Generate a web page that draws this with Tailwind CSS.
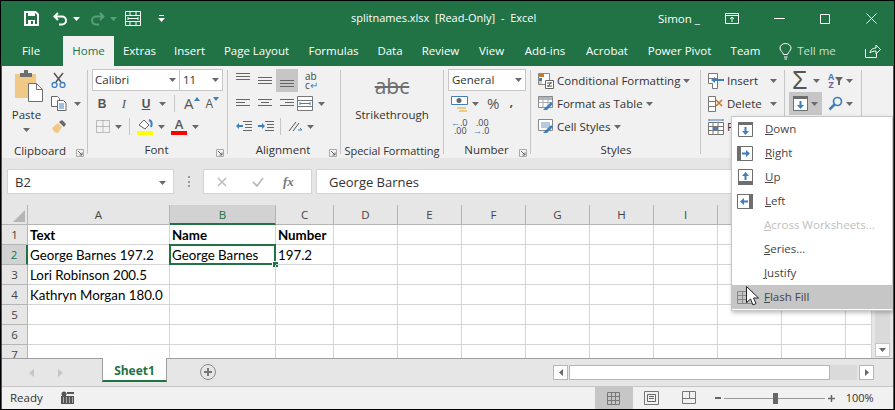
<!DOCTYPE html>
<html>
<head>
<meta charset="utf-8">
<script src="https://cdn.jsdelivr.net/npm/@tailwindcss/browser@4"></script>
</head>
<body class="bg-black">
<!-- shared glyphs -->
<svg class="hidden">
  <symbol id="tri" viewBox="0 0 7 4"><path d="M0 0h7L3.5 4z" fill="#6a6a6a"/></symbol>
  <symbol id="launch" viewBox="0 0 8 8"><path d="M.5.5h7v7h-7z" fill="none" stroke="#aaa"/><path d="M2 2l4 4M6 3.5V6H3.5" fill="none" stroke="#666"/></symbol>
  <symbol id="lines" viewBox="0 0 14 8"><path d="M0 .5h14M0 3.5h14M0 6.5h14" stroke="#666"/></symbol>
</svg>

<div class="relative w-[895px] h-[410px] overflow-hidden border border-black bg-[#217346] px-px pb-px flex flex-col font-['Open_Sans',sans-serif] text-[11.5px] text-[#333]">

  <!-- title bar -->
  <div class="h-[35px] flex items-center text-white shrink-0">
    <svg class="ml-[22px]" width="15" height="15" viewBox="0 0 15 15"><path d="M1 1h10.5L14 3.500V14H1z" fill="none" stroke="#fff" stroke-width="2"/><path d="M4 1h7v4H4zM4 9h7v5H4z" fill="#fff"/><path d="M7 10h2v3H7z" fill="#217346"/></svg>
    <svg class="ml-[14px]" width="15" height="14" viewBox="0 0 15 14"><path d="M5 1L1.500 4.500 5 8M2 4.500h7a4 4 0 0 1 0 8H6" fill="none" stroke="#fff" stroke-width="2"/></svg>
    <svg class="ml-[5px] w-[7px] h-[4px]" viewBox="0 0 7 4"><path d="M0 0h7L3.500 4z" fill="#fff"/></svg>
    <svg class="ml-[10px]" width="15" height="14" viewBox="0 0 15 14"><path d="M10 1l3.500 3.500L10 8M13 4.500H6a4 4 0 0 0 0 8h3" fill="none" stroke="#5a9e7b" stroke-width="2"/></svg>
    <svg class="ml-[5px] w-[7px] h-[4px]" viewBox="0 0 7 4"><path d="M0 0h7L3.500 4z" fill="#5a9e7b"/></svg>
    <svg class="ml-[8px]" width="16" height="15" viewBox="0 0 16 15"><path d="M.5.500h15v14H.5zM.5 4.500h15M.5 10.500h15M3 7.500h10M3 6v3M13 6v3M5 .5v4M11 .5v4M5 10.500v4M11 10.500v4" fill="none" stroke="#fff"/></svg>
    <svg class="ml-[17px]" width="7" height="8" viewBox="0 0 7 8"><path d="M1 .5h5" stroke="#fff"/><path d="M0 3h7L3.500 7z" fill="#fff"/></svg>
    <span class="ml-[186px] w-[191px] whitespace-pre text-[11px]">splitnames.xlsx  [Read-Only]  -  Excel</span>
    <span class="ml-[116px] whitespace-pre">Simon _</span>
    <svg class="ml-[25px]" width="14" height="11" viewBox="0 0 14 11"><path d="M.5.500h13v10H.5zM.5 2.500h13M7 9V4M5 6l2-2 2 2" fill="none" stroke="#fff"/></svg>
    <svg class="ml-[35px]" width="11" height="1" viewBox="0 0 11 1"><path d="M0 .5h11" stroke="#fff"/></svg>
    <svg class="ml-[35px]" width="10" height="10" viewBox="0 0 10 10"><path d="M.5.500h9v9h-9z" fill="none" stroke="#fff"/></svg>
    <svg class="ml-[36px]" width="11" height="11" viewBox="0 0 11 11"><path d="M.5.500l10 10M10.500.5l-10 10" stroke="#fff"/></svg>
  </div>

  <!-- tabs -->
  <div class="h-[30px] flex items-stretch shrink-0 pl-[10px] text-white text-[11.5px] leading-[30px] whitespace-nowrap text-center">
    <span class="w-[38px]">File</span>
    <span class="ml-[13px] w-[51px] bg-[#f1f1f1] text-[#217346]">Home</span>
    <span class="w-[51px]">Extras</span>
    <span class="w-[49px]">Insert</span>
    <span class="w-[85px]">Page Layout</span>
    <span class="w-[69px]">Formulas</span>
    <span class="w-[44px]">Data</span>
    <span class="w-[57px]">Review</span>
    <span class="w-[45px]">View</span>
    <span class="w-[62px]">Add-ins</span>
    <span class="w-[62px]">Acrobat</span>
    <span class="w-[83px]">Power Pivot</span>
    <span class="w-[49px]">Team</span>
    <svg class="ml-[9px] mt-[7px]" width="13" height="17" viewBox="0 0 13 17"><path d="M4.500 11.500C4 9 1 8 1 5a5.500 4.500 0 0 1 11 0c0 3-3 4-3.500 6.500zM5 14h3.500M5.500 16h2.500" fill="none" stroke="#fff"/></svg>
    <span class="ml-[5px] w-[39px] text-[#c9ddd2]">Tell me</span>
    <svg class="ml-[29px] mt-[8px]" width="16" height="14" viewBox="0 0 16 14"><path d="M.5 5v8.500h11V10M5 9c0-3 3-5 6-5V1l4.500 4.500L11 10V7c-2 0-4.500 .5-6 2z" fill="none" stroke="#fff"/></svg>
  </div>

  <!-- ribbon -->
  <div class="h-[92px] shrink-0 bg-[#f1f1f1] flex py-1">

    <!-- clipboard -->
    <div class="relative w-[86px] border-r border-[#c6c6c6] flex flex-col">
      <div class="h-[76px] flex">
        <div class="w-[49px] flex flex-col items-center">
          <svg class="ml-[4px]" width="30" height="32" viewBox="0 0 30 32"><path d="M1 4h21v24H1z" fill="#f0c987"/><path d="M6 3h4V0h4v3h4v4H6z" fill="#6e6e6e"/><path d="M14.500 13.500h8l6 6v12h-14z" fill="#fff" stroke="#6e6e6e"/><path d="M22.500 13.500v6h6" fill="none" stroke="#6e6e6e"/></svg>
          <span class="mt-[3px] leading-[20px]">Paste</span>
          <svg class="w-[7px] h-[4px] mt-[3px]"><use href="#tri"/></svg>
        </div>
        <div class="flex flex-col">
          <svg class="mt-[2px]" width="15" height="16" viewBox="0 0 15 16"><path d="M3 1l7 9M12 1L5 10" stroke="#555" stroke-width="1.500"/><circle cx="3.500" cy="13" r="2.500" fill="none" stroke="#3f7fbf" stroke-width="1.300"/><circle cx="11.500" cy="13" r="2.500" fill="none" stroke="#3f7fbf" stroke-width="1.300"/></svg>
          <div class="flex items-center mt-[8px]">
            <svg width="16" height="15" viewBox="0 0 16 15"><path d="M.5.500h6l2 2v8h-8z" fill="#fff" stroke="#666"/><path d="M6.500 4.500h6l2.500 2.500v7.500H6.500z" fill="#fff" stroke="#666"/><path d="M8 8h5M8 10h5M8 12h5" stroke="#3f7fbf"/></svg>
            <svg class="ml-[7px] w-[7px] h-[4px]"><use href="#tri"/></svg>
          </div>
          <svg class="mt-[8px]" width="16" height="15" viewBox="0 0 16 15"><path d="M1 9l6-5 4 4-4 6c-3 0-5-2-6-5z" fill="#f0c987"/><path d="M8 3l3-2 4 4-2 3z" fill="#666"/></svg>
        </div>
      </div>
      <div class="h-2 leading-[10px] text-center pr-[9px]">Clipboard</div>
      <svg class="absolute right-[3px] bottom-[-3px] w-2 h-2"><use href="#launch"/></svg>
    </div>

    <!-- font -->
    <div class="relative w-[140px] border-r border-[#c6c6c6] flex flex-col">
      <div class="h-[76px] -mt-px pl-[4px]">
        <div class="h-[23px] flex">
          <div class="w-[88px] h-[22px] bg-white border border-[#c6c6c6] flex items-center justify-between pl-[2px] pr-[3px]">Calibri<svg class="w-[7px] h-[4px]"><use href="#tri"/></svg></div>
          <div class="w-[43px] h-[22px] bg-white border border-l-0 border-[#c6c6c6] flex items-center justify-between pl-[3px] pr-[3px]">11<svg class="w-[7px] h-[4px]"><use href="#tri"/></svg></div>
        </div>
        <div class="h-[23px] flex items-center text-[#555]">
          <span class="w-[22px] text-center font-bold text-[12px] font-['Liberation_Sans',sans-serif] -ml-px">B</span>
          <span class="w-[22px] text-center italic text-[13px] font-['Liberation_Serif',serif]">I</span>
          <span class="w-[22px] text-center underline text-[12px] font-bold font-['Liberation_Sans',sans-serif]">U</span>
          <svg class="ml-[2px] w-[7px] h-[4px]"><use href="#tri"/></svg>
          <span class="ml-[8px] w-px h-[17px] bg-[#c6c6c6]"></span>
          <span class="ml-[9px] text-[15px] leading-none">A</span>
          <svg class="mb-[9px]" width="6" height="4" viewBox="0 0 6 4"><path d="M0 4h6L3 0z" fill="#3f7fbf"/></svg>
          <span class="ml-[6px] text-[12px] leading-none">A</span>
          <svg class="mb-[9px]" width="6" height="4" viewBox="0 0 6 4"><path d="M0 0h6L3 4z" fill="#3f7fbf"/></svg>
        </div>
        <div class="h-[23px] flex items-center">
          <svg class="ml-[4px]" width="14" height="13" viewBox="0 0 14 13"><path d="M.5.500h13v12H.5zM7 .5v12M.5 6.500h13" fill="none" stroke="#888" stroke-dasharray="1 1"/></svg>
          <svg class="ml-[5px] w-[7px] h-[4px]"><use href="#tri"/></svg>
          <span class="ml-[7px] w-px h-[17px] bg-[#c6c6c6]"></span>
          <div class="ml-[7px] w-4 flex flex-col items-center">
            <svg width="16" height="11" viewBox="0 0 16 11"><path d="M2 6l5-5 5 5-4 4z" fill="#fff" stroke="#666"/><path d="M12 1c3 1 3 4 2 7" fill="none" stroke="#3f7fbf" stroke-width="2"/></svg>
            <span class="w-4 h-[4px] bg-[#ffff00] mt-px"></span>
          </div>
          <svg class="ml-[5px] w-[7px] h-[4px]"><use href="#tri"/></svg>
          <div class="ml-[6px] w-4 flex flex-col items-center">
            <span class="text-[13px] leading-[11px] font-semibold text-[#555]">A</span>
            <span class="w-4 h-[4px] bg-[#ff0000] mt-px"></span>
          </div>
          <svg class="ml-[5px] w-[7px] h-[4px]"><use href="#tri"/></svg>
        </div>
      </div>
      <div class="h-2 leading-[10px] text-center pr-[2px]">Font</div>
      <svg class="absolute right-[3px] bottom-[-3px] w-2 h-2"><use href="#launch"/></svg>
    </div>

    <!-- alignment -->
    <div class="relative w-[113px] border-r border-[#c6c6c6] flex flex-col">
      <div class="h-[76px] -mt-px pl-[4px]">
        <div class="h-[23px] flex items-center">
          <span class="w-[22px] h-[23px] flex justify-center pt-[4px]"><svg class="w-[14px] h-2"><use href="#lines"/></svg></span>
          <span class="w-[22px] h-[23px] flex justify-center items-center"><svg class="w-[14px] h-2"><use href="#lines"/></svg></span>
          <span class="w-[22px] h-[23px] flex justify-center items-end pb-[4px] bg-[#c6c6c6]"><svg class="w-[14px] h-2"><use href="#lines"/></svg></span>
          <span class="ml-[7px] flex flex-col text-[10px] leading-[9px] text-[#444]"><span>ab</span><span>c<span class="text-[#3f7fbf]">↵</span></span></span>
        </div>
        <div class="h-[23px] flex items-center">
          <svg class="ml-[4px]" width="14" height="9" viewBox="0 0 14 9"><path d="M0 .5h14M0 3.500h9M0 6.500h14" stroke="#666"/></svg>
          <svg class="ml-[8px]" width="14" height="9" viewBox="0 0 14 9"><path d="M0 .5h14M3 3.500h8M0 6.500h14" stroke="#666"/></svg>
          <svg class="ml-[8px]" width="14" height="9" viewBox="0 0 14 9"><path d="M0 .5h14M5 3.500h9M0 6.500h14" stroke="#666"/></svg>
          <svg class="ml-[3px]" width="16" height="15" viewBox="0 0 16 15"><path d="M.5.500h15v14H.5zM.5 4.500h15M.5 10.500h15" fill="#fff" stroke="#777"/><path d="M3 7.500h10M3 6v3M13 6v3" stroke="#3f7fbf"/></svg>
          <svg class="ml-[5px] w-[7px] h-[4px]"><use href="#tri"/></svg>
        </div>
        <div class="h-[23px] flex items-center">
          <svg class="ml-[4px]" width="16" height="11" viewBox="0 0 16 11"><path d="M7 .5h9M9 3.500h7M9 6.500h7M7 9.500h9" stroke="#666"/><path d="M0 5l3-3v2h4v2H3v2z" fill="#3f7fbf"/></svg>
          <svg class="ml-[6px]" width="16" height="11" viewBox="0 0 16 11"><path d="M7 .5h9M9 3.500h7M9 6.500h7M7 9.500h9" stroke="#666"/><path d="M7 5L4 2v2H0v2h4v2z" fill="#3f7fbf"/></svg>
          <span class="ml-[6px] w-px h-[17px] bg-[#c6c6c6]"></span>
          <svg class="ml-[7px]" width="15" height="13" viewBox="0 0 15 13"><path d="M1 11l7-9M5 11l6-8" stroke="#555"/><path d="M10 10h4M14 10l-2-2" stroke="#3f7fbf" fill="none"/></svg>
          <svg class="ml-[4px] w-[7px] h-[4px]"><use href="#tri"/></svg>
        </div>
      </div>
      <div class="h-2 leading-[10px] text-center pr-[2px]">Alignment</div>
      <svg class="absolute right-[3px] bottom-[-3px] w-2 h-2"><use href="#launch"/></svg>
    </div>

    <!-- special formatting -->
    <div class="w-[103px] border-r border-[#c6c6c6] flex flex-col">
      <div class="h-[76px] flex flex-col items-center">
        <span class="mt-[3px] text-[21px] leading-[26px] text-[#6e6e6e] line-through">abc</span>
        <span class="mt-[7px] leading-[18px]">Strikethrough</span>
      </div>
      <div class="h-2 leading-[10px] text-center text-[11px] whitespace-nowrap">Special Formatting</div>
    </div>

    <!-- number -->
    <div class="relative w-[87px] border-r border-[#c6c6c6] flex flex-col">
      <div class="h-[76px] -mt-px pl-[4px]">
        <div class="h-[23px]">
          <div class="w-[78px] h-[22px] bg-white border border-[#c6c6c6] flex items-center justify-between pl-[3px] pr-[3px]">General<svg class="w-[7px] h-[4px]"><use href="#tri"/></svg></div>
        </div>
        <div class="h-[23px] flex items-center">
          <svg class="ml-[3px]" width="17" height="16" viewBox="0 0 17 16"><path d="M.5.500h16v8H.5z" fill="#fff" stroke="#3f7fbf"/><circle cx="8" cy="4.500" r="2.500" fill="#666"/><path d="M6 11h9v2H6zM8 14h8v2H8z" fill="#f0c987"/></svg>
          <svg class="ml-[4px] w-[7px] h-[4px]"><use href="#tri"/></svg>
          <span class="ml-[8px] text-[15px] leading-none text-[#555]">%</span>
          <span class="ml-[10px] text-[13px] leading-none font-bold text-[#555] -mt-[4px]">,</span>
        </div>
        <div class="h-[23px] flex items-center text-[9px] leading-[8px] text-[#444] pl-[3px]">
          <span class="w-[22px] flex flex-col items-start"><span><span class="text-[#3f7fbf]">←</span>.0</span><span class="pl-[3px]">.00</span></span>
          <span class="flex flex-col items-start"><span class="pl-[3px]">.00</span><span><span class="text-[#3f7fbf]">→</span>.0</span></span>
        </div>
      </div>
      <div class="h-2 leading-[10px] text-center pr-[1px]">Number</div>
      <svg class="absolute right-[3px] bottom-[-3px] w-2 h-2"><use href="#launch"/></svg>
    </div>

    <!-- styles -->
    <div class="w-[170px] border-r border-[#c6c6c6] flex flex-col">
      <div class="h-[76px] -mt-px pl-[7px]">
        <div class="h-[23px] flex items-center">
          <svg width="16" height="16" viewBox="0 0 16 16"><path d="M.5.500h11v11H.5z" fill="#fff" stroke="#888"/><path d="M1 1h5v3H1z" fill="#c9772b"/><path d="M1 5h3v3H1z" fill="#3f7fbf"/><path d="M1 8h3v3H1z" fill="#f0c987"/><path d="M7.500 7.500h8v8h-8z" fill="#fff" stroke="#666"/><path d="M9 10h5M9 13h5M10 14l3-5" stroke="#555"/></svg>
          <span class="ml-[3px] whitespace-nowrap">Conditional Formatting</span>
          <svg class="ml-[3px] w-[7px] h-[4px]"><use href="#tri"/></svg>
        </div>
        <div class="h-[23px] flex items-center">
          <svg width="16" height="16" viewBox="0 0 16 16"><path d="M.5.500h14v11H.5z" fill="#fff" stroke="#888"/><path d="M1 1h13v3H1z" fill="#aab7cc"/><path d="M5 .5v11M10 .5v11M.5 6.500h14" stroke="#aaa"/><path d="M7 12l6-6 2 2-6 6H5z" fill="#3f7fbf"/></svg>
          <span class="ml-[3px] whitespace-nowrap">Format as Table</span>
          <svg class="ml-[3px] w-[7px] h-[4px]"><use href="#tri"/></svg>
        </div>
        <div class="h-[23px] flex items-center">
          <svg width="16" height="16" viewBox="0 0 16 16"><path d="M.5.500h14v11H.5z" fill="#fff" stroke="#888"/><path d="M3 3h9v6H3z" fill="#b8c9df"/><path d="M7 12l6-6 2 2-6 6H5z" fill="#3f7fbf"/></svg>
          <span class="ml-[3px] whitespace-nowrap">Cell Styles</span>
          <svg class="ml-[3px] w-[7px] h-[4px]"><use href="#tri"/></svg>
        </div>
      </div>
      <div class="h-2 leading-[10px] text-center pl-[1px]">Styles</div>
    </div>

    <!-- cells -->
    <div class="w-[84px] border-r border-[#c6c6c6] flex flex-col">
      <div class="h-[76px] -mt-px pl-[7px]">
        <div class="h-[23px] flex items-center">
          <svg width="16" height="16" viewBox="0 0 16 16"><path d="M.5.500h9v15h-5v-5h-4zM.5 5.500h9" fill="#fff" stroke="#777"/><path d="M3 7l4-3v2h9v2H7v2z" fill="#3f7fbf"/></svg>
          <span class="ml-[3px]">Insert</span>
          <svg class="ml-[12px] w-[7px] h-[4px]"><use href="#tri"/></svg>
        </div>
        <div class="h-[23px] flex items-center">
          <svg width="16" height="16" viewBox="0 0 16 16"><path d="M.5.500h7v15h-7zM.5 5.500h7M.5 10.500h7" fill="#fff" stroke="#777"/><path d="M8 4l6 6M14 4l-6 6" stroke="#c9772b" stroke-width="1.500"/></svg>
          <span class="ml-[3px]">Delete</span>
          <svg class="ml-[8px] w-[7px] h-[4px]"><use href="#tri"/></svg>
        </div>
        <div class="h-[23px] flex items-center">
          <svg width="16" height="16" viewBox="0 0 16 16"><path d="M1 1h14M1 0v2M15 0v2" stroke="#3f7fbf"/><path d="M.5 3.500h15v12H.5zM5 3.500v12M10 3.500v12M.5 7.500h15M.5 11.500h15" fill="#fff" stroke="#777"/><path d="M5 8h5v3H5z" fill="#3f7fbf"/></svg>
          <span class="ml-[3px]">Format</span>
        </div>
      </div>
    </div>

    <!-- editing -->
    <div class="w-[77px] border-r border-[#c6c6c6] flex flex-col">
      <div class="h-[76px] -mt-px pl-[4px]">
        <div class="h-[23px] flex items-center">
          <span class="ml-[3px] w-[15px] text-[25px] leading-none text-[#555] font-['Liberation_Sans',sans-serif]">Σ</span>
          <svg class="ml-[6px] w-[7px] h-[4px]"><use href="#tri"/></svg>
          <span class="ml-[8px] flex flex-col text-[9px] leading-[8px] font-bold items-center"><span class="text-[#3f7fbf]">A</span><span class="text-[#7e5ca8]">Z</span></span>
          <svg class="ml-[1px]" width="8" height="8" viewBox="0 0 8 8"><path d="M0 0h8L5 4v4H3V4z" fill="#666"/></svg>
          <svg class="ml-[3px] w-[7px] h-[4px]"><use href="#tri"/></svg>
        </div>
        <div class="h-[23px] flex items-center">
          <span class="w-[33px] h-[23px] bg-[#c6c6c6] flex items-center pl-[4px]">
            <svg width="15" height="15" viewBox="0 0 15 15"><path d="M.5.500h14v14H.5z" fill="#fff" stroke="#6e6e6e"/><path d="M0 0h15v3H0z" fill="#6e6e6e"/><path d="M6.500 5h2v4H11l-3.500 4L4 9h2.500z" fill="#3f7fbf"/></svg>
            <svg class="ml-[3px] w-[7px] h-[4px]"><use href="#tri"/></svg>
          </span>
          <svg class="ml-[6px]" width="15" height="15" viewBox="0 0 15 15"><circle cx="9.500" cy="5.500" r="4" fill="none" stroke="#3f7fbf" stroke-width="1.700"/><path d="M6.500 8.500L1.500 13.500" stroke="#3f7fbf" stroke-width="2.500"/></svg>
          <svg class="ml-[3px] w-[7px] h-[4px]"><use href="#tri"/></svg>
        </div>
      </div>
    </div>
    <div class="flex-1"></div>
  </div>

  <!-- formula bar -->
  <div class="h-[47px] shrink-0 bg-[#e6e6e6] pt-[11px] pl-[5px] pr-[3px] flex items-start text-[13px]">
    <div class="w-[167px] h-[25px] bg-white border border-[#d4d4d4] flex items-center justify-between pt-[2px] pl-[7px] pr-[7px]">B2<svg class="w-[7px] h-[4px]"><use href="#tri"/></svg></div>
    <div class="ml-[14px] w-[3px] h-[11px] mt-[7px] border-l-2 border-dotted border-[#999]"></div>
    <div class="ml-[12px] w-[109px] h-[25px] bg-white border border-[#d4d4d4] flex items-center">
      <svg class="ml-[13px]" width="10" height="10" viewBox="0 0 10 10"><path d="M1 1l8 8M9 1l-8 8" stroke="#bbb" stroke-width="1.500"/></svg>
      <svg class="ml-[25px]" width="12" height="10" viewBox="0 0 12 10"><path d="M1 5l4 4 6-8" fill="none" stroke="#bbb" stroke-width="1.800"/></svg>
      <span class="ml-[19px] italic font-bold text-[13px] text-[#777] font-['Liberation_Serif',serif]">fx</span>
    </div>
    <div class="ml-[4px] flex-1 h-[25px] bg-white border border-[#d4d4d4] flex items-center pt-[2px] pl-[12px]">George Barnes</div>
  </div>

  <!-- sheet -->
  <div class="h-[153px] shrink-0 bg-white flex overflow-hidden">
    <div id="sheet" class="grid grid-cols-[26px_142px_106px_58px_repeat(8,64px)_26px] auto-rows-[20px] w-[870px] border-r border-[#9e9e9e] font-['Lato',sans-serif] text-[13.3px] text-black"></div>
    <div class="w-[21px] bg-[#e6e6e6] pl-[3px] pr-[3px] flex flex-col justify-end">
      <div class="flex-1 bg-[#dadada]"></div>
      <div class="h-[14px] mb-px bg-white border border-[#c6c6c6] flex items-center justify-center"><svg class="w-[7px] h-[4px]"><use href="#tri"/></svg></div>
    </div>
  </div>

  <!-- sheet tabs -->
  <div class="h-[29px] shrink-0 bg-[#e6e6e6] border-t border-b border-t-[#9e9e9e] border-b-[#c6c6c6] flex items-start">
    <svg class="ml-[27px] mt-[10px]" width="5" height="8" viewBox="0 0 5 8"><path d="M5 0v8L0 4z" fill="#c6c6c6"/></svg>
    <svg class="ml-[24px] mt-[10px]" width="5" height="8" viewBox="0 0 5 8"><path d="M0 0v8l5-4z" fill="#c6c6c6"/></svg>
    <div class="ml-[39px] -mt-px w-[65px] h-[24px] bg-white border-x border-[#9e9e9e] border-b-2 border-b-[#217346] text-center leading-[25px] font-bold text-[12px] text-[#217346]">Sheet1</div>
    <svg class="ml-[33px] mt-[5px]" width="16" height="16" viewBox="0 0 16 16"><circle cx="8" cy="8" r="7.500" fill="none" stroke="#8a8a8a"/><path d="M8 4v8M4 8h8" stroke="#777" stroke-width="2"/></svg>
    <div class="ml-[337px] mt-[6px] flex h-[15px] w-[321px]">
      <div class="w-[15px] bg-white border border-[#b5b5b5] flex items-center justify-center"><svg width="4" height="7" viewBox="0 0 4 7"><path d="M4 0v7L0 3.500z" fill="#6a6a6a"/></svg></div>
      <div class="ml-px w-[261px] bg-white border border-[#b5b5b5]"></div>
      <div class="w-[27px] bg-[#dadada]"></div>
      <div class="ml-[2px] w-[15px] bg-white border border-[#b5b5b5] flex items-center justify-center"><svg width="4" height="7" viewBox="0 0 4 7"><path d="M0 0v7l4-3.500z" fill="#6a6a6a"/></svg></div>
    </div>
  </div>

  <!-- status bar -->
  <div class="h-[22px] shrink-0 bg-[#f1f1f1] flex items-stretch">
    <span class="ml-[8px] leading-[21px]">Ready</span>
    <svg class="ml-[18px] mt-[4px]" width="13" height="13" viewBox="0 0 13 13"><circle cx="3" cy="3" r="2.500" fill="#555"/><path d="M6 1h7v2H6zM0 5h13v8H0z" fill="#555"/><path d="M2 7h1M5 7h1M8 7h1M11 7h1M2 9h1M5 9h1M8 9h1M11 9h1M2 11h1M5 11h1M8 11h1M11 11h1" stroke="#fff"/></svg>
    <div class="ml-[521px] w-[38px] bg-[#c6c6c6] flex items-center justify-center">
      <svg width="13" height="13" viewBox="0 0 13 13"><path d="M.5.500h12v12H.5zM4.500.5v12M8.500.5v12M.5 4.500h12M.5 8.500h12" fill="none" stroke="#777"/></svg>
    </div>
    <svg class="ml-[11px] mt-[4px]" width="15" height="14" viewBox="0 0 15 14"><path d="M.5.500h14v13H.5z" fill="none" stroke="#777"/><path d="M3.500 3.500h8v7h-8zM5 5.500h5M5 7.500h5" fill="none" stroke="#666"/></svg>
    <svg class="ml-[23px] mt-[4px]" width="14" height="13" viewBox="0 0 14 13"><path d="M.5.500h13v12H.5zM7.500.5v7H.5M7.500 7.500h6" fill="none" stroke="#777"/></svg>
    <div class="ml-[19px] flex items-center w-[120px]">
      <span class="w-[6px] h-[2px] bg-[#666]"></span>
      <span class="ml-[3px] w-[50px] h-px bg-[#999]"></span>
      <span class="w-[5px] h-[11px] bg-[#666]"></span>
      <span class="w-[47px] h-px bg-[#999]"></span>
      <svg class="ml-[3px]" width="7" height="7" viewBox="0 0 7 7"><path d="M3.500 0v7M0 3.500h7" stroke="#666" stroke-width="1.500"/></svg>
    </div>
    <span class="ml-[11px] leading-[21px] text-[11px]">100%</span>
  </div>

  <!-- fill menu -->
  <div class="absolute left-[730px] top-[115px] w-[162px] h-[195px] bg-white border border-[#c6c6c6] shadow-[1px_2px_4px_rgba(0,0,0,0.25)] text-[11.5px] text-[#444]">
    <div class="h-6 flex items-center pl-[6px]">
      <svg width="15" height="15" viewBox="0 0 15 15"><path d="M.5.500h14v14H.5z" fill="#fff" stroke="#6e6e6e"/><path d="M0 0h15v3H0z" fill="#6e6e6e"/><path d="M6.500 5h2v4H11l-3.500 4L4 9h2.500z" fill="#3f7fbf"/></svg>
      <span class="ml-[12px]"><u>D</u>own</span>
    </div>
    <div class="h-6 flex items-center pl-[5px]">
      <svg width="16" height="15" viewBox="0 0 16 15"><path d="M.5.500h15v14H.5z" fill="#fff" stroke="#6e6e6e"/><path d="M0 0h4v15H0z" fill="#6e6e6e"/><path d="M5 6.500h4V4l4 3.500L9 11V8.500H5z" fill="#3f7fbf"/></svg>
      <span class="ml-[12px]"><u>R</u>ight</span>
    </div>
    <div class="h-6 flex items-center pl-[6px]">
      <svg width="15" height="16" viewBox="0 0 15 16"><path d="M.5.500h14v15H.5z" fill="#fff" stroke="#6e6e6e"/><path d="M0 12h15v4H0z" fill="#6e6e6e"/><path d="M6.500 11V7H4l3.500-4L11 7H8.500v4z" fill="#3f7fbf"/></svg>
      <span class="ml-[12px]"><u>U</u>p</span>
    </div>
    <div class="h-6 flex items-center pl-[5px]">
      <svg width="16" height="15" viewBox="0 0 16 15"><path d="M.5.500h15v14H.5z" fill="#fff" stroke="#6e6e6e"/><path d="M12 0h4v15h-4z" fill="#6e6e6e"/><path d="M11 6.500H7V4L3 7.500 7 11V8.500h4z" fill="#3f7fbf"/></svg>
      <span class="ml-[12px]"><u>L</u>eft</span>
    </div>
    <div class="h-6 flex items-center pl-[32px] text-[#c0c0c0]"><span><u>A</u>cross Worksheets...</span></div>
    <div class="h-6 flex items-center pl-[32px]"><span><u>S</u>eries...</span></div>
    <div class="h-6 flex items-center pl-[32px]"><span><u>J</u>ustify</span></div>
    <div class="h-6 flex items-center pl-[5px] bg-[#c6c6c6]">
      <svg width="16" height="13" viewBox="0 0 16 13"><path d="M.5.500h15v12H.5zM.5 4.500h15M.5 8.500h15M5.500.5v12M10.500.5v12" fill="none" stroke="#888"/></svg>
      <span class="ml-[11px]"><u>F</u>lash Fill</span>
    </div>
  </div>

  <!-- mouse pointer -->
  <svg class="absolute left-[745px] top-[285px]" width="13" height="20" viewBox="0 0 13 20"><path d="M.5.500v16l4-3.500 2.500 6 3-1.500-2.500-5.500H12.500z" fill="#fff" stroke="#222"/></svg>
</div>

<script>
  // gridlines and cell contents
  var sheet = document.getElementById("sheet");
  var cols = ["A", "B", "C", "D", "E", "F", "G", "H", "I", "J", "K", "L"];
  var data = {
    1: { A: "Text", B: "Name", C: "Number" },
    2: { A: "George Barnes 197.2", B: "George Barnes", C: "197.2" },
    3: { A: "Lori Robinson 200.5" },
    4: { A: "Kathryn Morgan 180.0" },
  };

  function add(cls, text) {
    var el = document.createElement("div");
    el.className = cls;
    if (text) el.textContent = text;
    sheet.appendChild(el);
    return el;
  }

  var corner = add("bg-[#e6e6e6] border-r border-b border-[#b5b5b5] flex items-end justify-end p-[2px]");
  corner.innerHTML = '<svg width="12" height="12" viewBox="0 0 12 12"><path d="M12 0v12H0z" fill="#b5b5b5"/></svg>';

  cols.forEach(function (c) {
    if (c === "B") {
      add("bg-[#d2d2d2] border-r border-b-2 border-r-[#b5b5b5] border-b-[#217346] text-center text-[#217346] leading-[20px] font-['Open_Sans',sans-serif] text-[11.5px]", c);
    } else {
      add("bg-[#e6e6e6] border-r border-b border-[#b5b5b5] text-center text-[#444] leading-[20px] font-['Open_Sans',sans-serif] text-[11.5px]", c);
    }
  });

  for (var r = 1; r <= 7; r++) {
    if (r === 2) {
      add("bg-[#d2d2d2] border-r-2 border-b border-r-[#217346] border-b-[#b5b5b5] text-center text-[#217346] leading-[20px] font-['Open_Sans',sans-serif] text-[11.5px]", r);
    } else {
      add("bg-[#e6e6e6] border-r border-b border-[#b5b5b5] text-center text-[#444] leading-[20px] font-['Open_Sans',sans-serif] text-[11.5px]", r);
    }
    cols.forEach(function (c) {
      var text = (data[r] || {})[c];
      var cls = "relative border-r border-b border-[#d4d4d4] pl-[2px] leading-[20px] whitespace-nowrap";
      if (r === 1) cls += " font-bold";
      var cell = add(cls, text);
      if (r === 2 && c === "B") {
        cell.innerHTML += '<span class="absolute -left-px -top-px -right-px -bottom-px border-2 border-[#217346]"></span><span class="absolute -right-[3px] -bottom-[3px] w-[6px] h-[6px] bg-[#217346] border-l border-t border-white"></span>';
      }
    });
  }
</script>
</body>
</html>
